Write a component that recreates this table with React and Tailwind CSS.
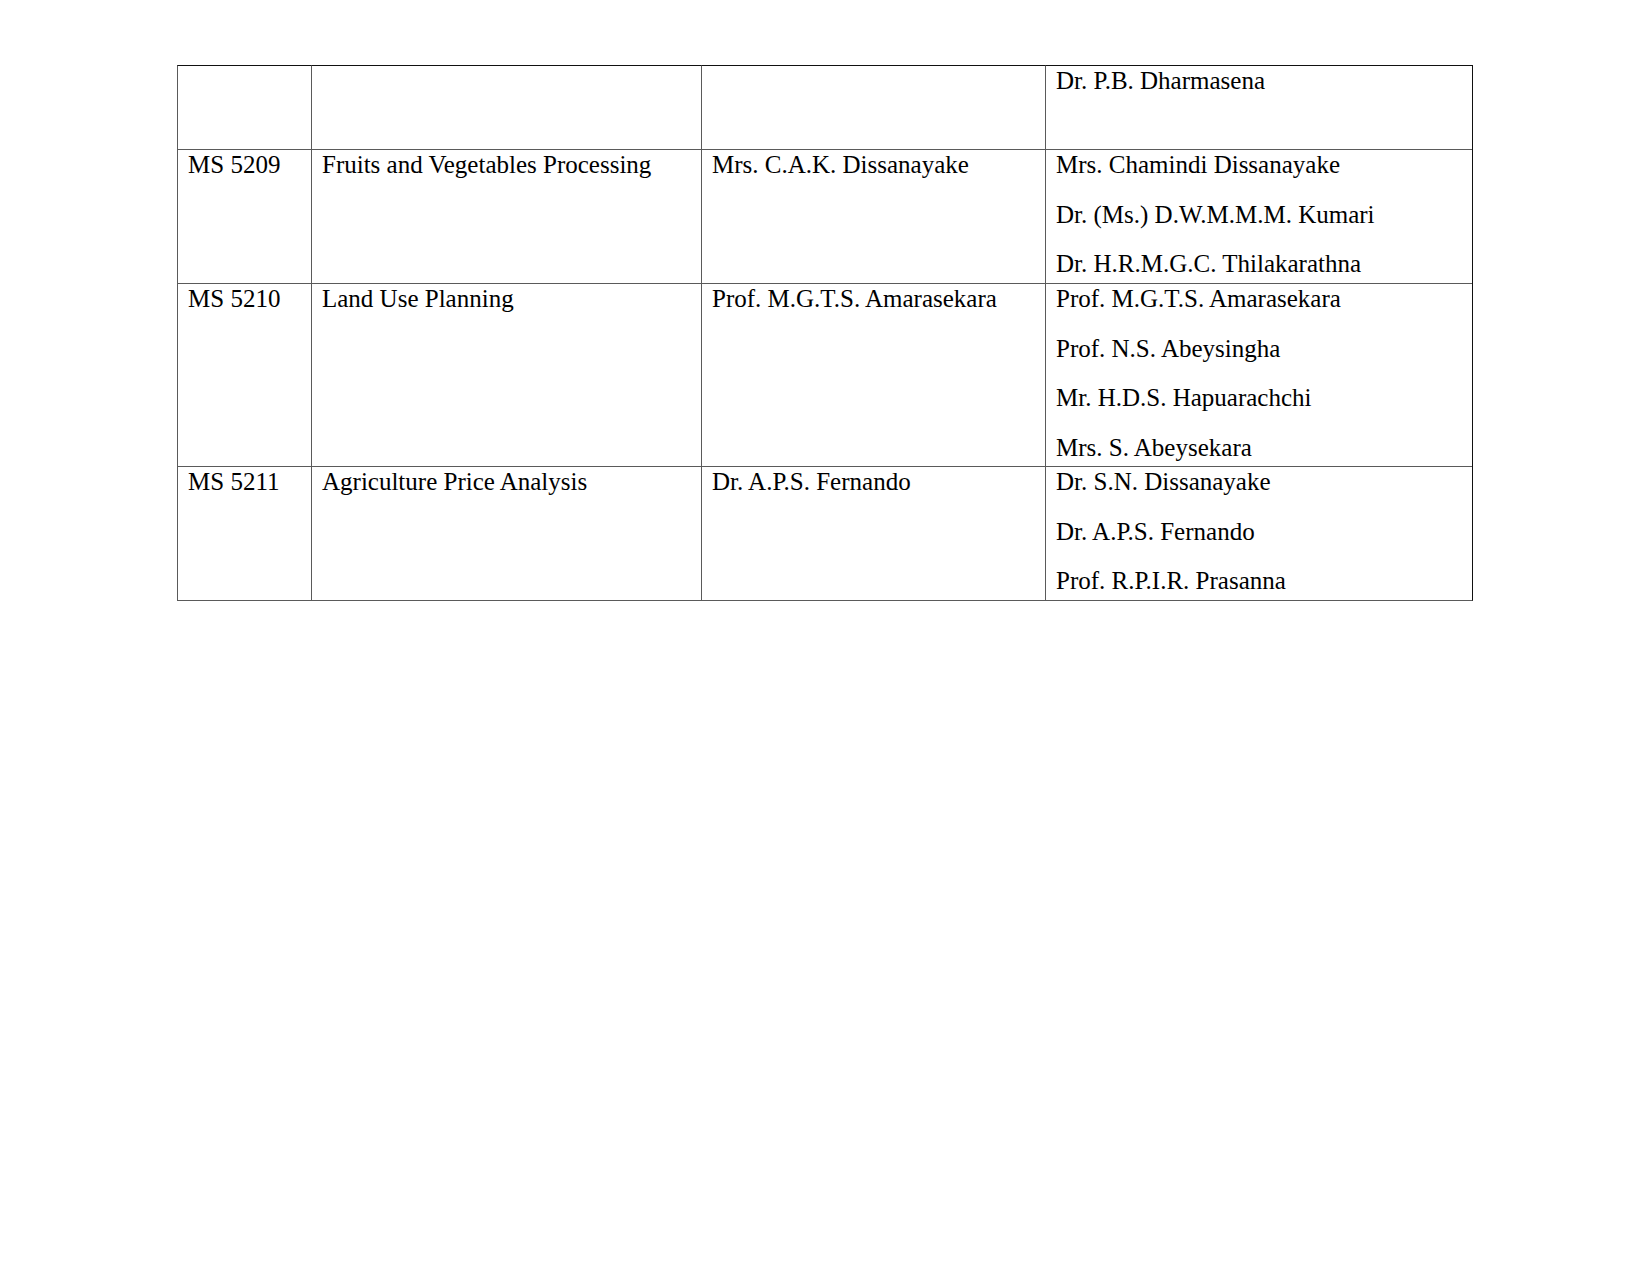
import React from 'react';

const rows = [
    { code: '', title: '', coordinator: '', staff: ['Dr. P.B. Dharmasena'], h: 'h-[84px]' },
    {
        code: 'MS 5209',
        title: 'Fruits and Vegetables Processing',
        coordinator: 'Mrs. C.A.K. Dissanayake',
        staff: ['Mrs. Chamindi Dissanayake', 'Dr. (Ms.) D.W.M.M.M. Kumari', 'Dr. H.R.M.G.C. Thilakarathna'],
        h: 'h-[134px]',
    },
    {
        code: 'MS 5210',
        title: 'Land Use Planning',
        coordinator: 'Prof. M.G.T.S. Amarasekara',
        staff: ['Prof. M.G.T.S. Amarasekara', 'Prof. N.S. Abeysingha', 'Mr. H.D.S. Hapuarachchi', 'Mrs. S. Abeysekara'],
        h: 'h-[183px]',
    },
    {
        code: 'MS 5211',
        title: 'Agriculture Price Analysis',
        coordinator: 'Dr. A.P.S. Fernando',
        staff: ['Dr. S.N. Dissanayake', 'Dr. A.P.S. Fernando', 'Prof. R.P.I.R. Prasanna'],
        h: 'h-[134px]',
    },
];

function Cell({ children, className = '' }) {
    return (
        <div className={`border-l border-t border-l-[#5a5a5a] pl-[10px] ${className}`}>
            {children}
        </div>
    );
}

export default function App() {
    return (
        <main
            className="min-h-[1275px] w-full bg-white pt-[65px] pl-[177px] text-black text-[25px] leading-[29px]"
            style={{ fontFamily: '"Liberation Serif", "Times New Roman", serif' }}
        >
            <div className="w-[1296px] border-r border-b border-r-[#111] border-b-[#5a5a5a] grid grid-cols-[134px_390px_344px_427px]">
                {rows.map((r, i) => (
                    <React.Fragment key={i}>
                        <Cell className={`${r.h} ${i === 0 ? 'border-t-[#111]' : 'border-t-[#5a5a5a]'}`}>{r.code}</Cell>
                        <Cell className={`${r.h} ${i === 0 ? 'border-t-[#111]' : 'border-t-[#5a5a5a]'}`}>{r.title}</Cell>
                        <Cell className={`${r.h} ${i === 0 ? 'border-t-[#111]' : 'border-t-[#5a5a5a]'}`}>{r.coordinator}</Cell>
                        <Cell className={`${r.h} ${i === 0 ? 'border-t-[#111]' : 'border-t-[#5a5a5a]'}`}>
                            <div className="flex flex-col gap-[20.5px]">
                                {r.staff.map((s) => (
                                    <div key={s}>{s}</div>
                                ))}
                            </div>
                        </Cell>
                    </React.Fragment>
                ))}
            </div>
        </main>
    );
}
